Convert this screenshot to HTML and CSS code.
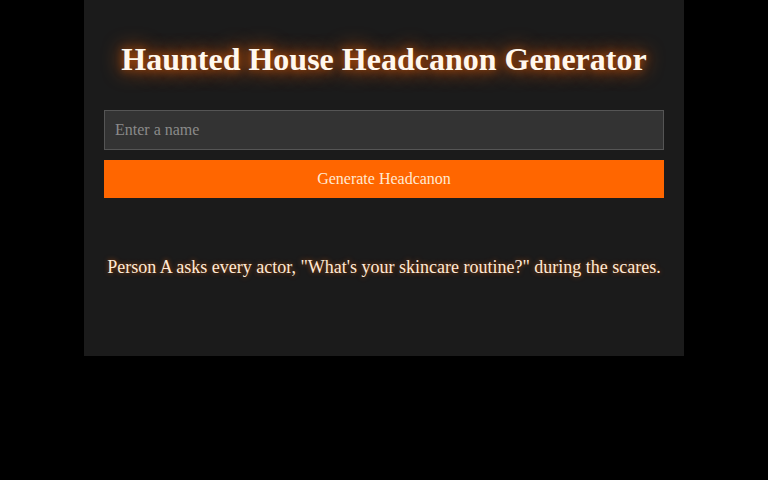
FILE: index.html
```html
<!DOCTYPE html>
<html lang="en">
<head>
<meta charset="utf-8">
<title>Haunted House Headcanon Generator</title>
<link rel="stylesheet" href="styles.css">
</head>
<body>
<main class="container">
  <h1 class="title">Haunted House Headcanon Generator</h1>
  <input class="name-input" type="text" placeholder="Enter a name">
  <button class="generate-btn" type="button">Generate Headcanon</button>
  <div class="result">Person A asks every actor, "What's your skincare routine?" during the scares.</div>
</main>
</body>
</html>
```

FILE: styles.css
```css
html, body {
  margin: 0;
  padding: 0;
  background: #000;
  font-family: "Liberation Serif", "Times New Roman", serif;
  color: #f5e6d3;
}

.container {
  box-sizing: border-box;
  width: 600px;
  margin: 0 auto;
  padding: 20px;
  background: #1b1b1b;
  display: flex;
  flex-direction: column;
}

.title {
  margin: 21px 0 32px;
  text-align: center;
  font-size: 32px;
  line-height: 37px;
  font-weight: bold;
  color: #fff8ee;
  text-shadow: 0 0 20px #ff6600, 0 0 8px rgba(255, 102, 0, 0.5);
}

.name-input {
  box-sizing: border-box;
  width: 100%;
  height: 40px;
  margin: 0 0 10px;
  padding: 10px;
  background: #333;
  border: 1px solid #555;
  color: #eee;
  font-family: inherit;
  font-size: 16px;
}

.name-input::placeholder {
  color: #8a8a8a;
}

.generate-btn {
  box-sizing: border-box;
  width: 100%;
  height: 38px;
  padding: 10px;
  border: none;
  background: #ff6600;
  color: #ffe9d2;
  font-family: inherit;
  font-size: 16px;
  cursor: pointer;
}

.result {
  margin: 59px 0 0;
  min-height: 79px;
  text-align: center;
  font-size: 18px;
  line-height: 21px;
  color: #ffead6;
  text-shadow: 0 0 5px rgba(255, 102, 0, 0.6);
  white-space: nowrap;
}
```
